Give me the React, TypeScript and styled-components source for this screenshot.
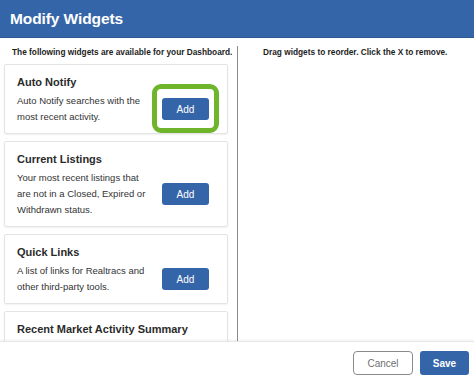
import React from 'react'
import styled, { createGlobalStyle } from 'styled-components'

const GlobalStyle = createGlobalStyle`
  html, body {
    margin: 0;
    padding: 0;
    background: #ffffff;
    font-family: "Liberation Sans", Arial, sans-serif;
  }
`

type Widget = {
  title: string
  description: string
  highlighted?: boolean
}

const widgets: Widget[] = [
  {
    title: 'Auto Notify',
    description: 'Auto Notify searches with the most recent activity.',
    highlighted: true,
  },
  {
    title: 'Current Listings',
    description: 'Your most recent listings that are not in a Closed, Expired or Withdrawn status.',
  },
  {
    title: 'Quick Links',
    description: 'A list of links for Realtracs and other third-party tools.',
  },
  {
    title: 'Recent Market Activity Summary',
    description: 'A summary of recent market activity in your area.',
  },
]

const App: React.FC = (): JSX.Element => {
  return (
    <>
      <GlobalStyle />
      <Modal>
        <Header>
          <Title>Modify Widgets</Title>
        </Header>
        <Body>
          <LeftColumn>
            <Caption>The following widgets are available for your Dashboard.</Caption>
            <CardList>
              {widgets.map((w) => (
                <Card key={w.title}>
                  <CardTitle>{w.title}</CardTitle>
                  <CardRow>
                    <CardText>{w.description}</CardText>
                    <ButtonHolder $highlighted={w.highlighted}>
                      <AddButton>Add</AddButton>
                    </ButtonHolder>
                  </CardRow>
                </Card>
              ))}
            </CardList>
          </LeftColumn>
          <Divider />
          <RightColumn>
            <Caption>Drag widgets to reorder. Click the X to remove.</Caption>
          </RightColumn>
        </Body>
        <Footer>
          <CancelButton>Cancel</CancelButton>
          <SaveButton>Save</SaveButton>
        </Footer>
      </Modal>
    </>
  )
}

export default App

const Modal = styled.div`
  width: 474px;
  height: 382px;
  display: flex;
  flex-direction: column;
  overflow: hidden;
  background: #ffffff;
`

const Header = styled.header`
  height: 37px;
  flex: 0 0 auto;
  background: #3565a9;
  display: flex;
  align-items: center;
  padding: 0 10px;
  border-bottom: 1px solid #2d5895;
`

const Title = styled.h1`
  margin: 0;
  color: #ffffff;
  font-size: 15.5px;
  font-weight: bold;
  letter-spacing: -0.1px;
`

const Body = styled.div`
  flex: 1 1 0;
  min-height: 0;
  display: flex;
  padding-top: 4px;
`

const LeftColumn = styled.div`
  width: 233px;
  display: flex;
  flex-direction: column;
  min-height: 0;
`

const RightColumn = styled.div`
  flex: 1 1 0;
  display: flex;
  flex-direction: column;
  padding-left: 13px;
`

const Divider = styled.div`
  width: 1px;
  background: #8c8c8c;
  margin: 4px 0 0 4px;
`

const Caption = styled.p`
  margin: 0;
  padding: 0 0 0 12px;
  font-size: 8.3px;
  font-weight: bold;
  color: #1d1d1d;
  line-height: 12px;
  height: 20px;
  display: flex;
  align-items: center;
`

const CardList = styled.div`
  flex: 1 1 0;
  min-height: 0;
  overflow: hidden;
  display: flex;
  flex-direction: column;
  gap: 7px;
  padding: 2px 5px 0 4px;
`

const Card = styled.div`
  flex: 0 0 auto;
  border: 1px solid #e4e4e4;
  border-radius: 2px;
  box-shadow: 0 1px 2px rgba(0, 0, 0, 0.06);
  padding: 10px 12px 8px 12px;
  display: flex;
  flex-direction: column;
  gap: 4px;
`

const CardTitle = styled.h3`
  margin: 0;
  font-size: 11px;
  font-weight: bold;
  color: #2b2b2b;
  line-height: 14px;
`

const CardRow = styled.div`
  display: flex;
  align-items: center;
  justify-content: space-between;
`

const CardText = styled.p`
  margin: 0;
  width: 136px;
  font-size: 9.5px;
  line-height: 16px;
  color: #333333;
`

const ButtonHolder = styled.div<{ $highlighted?: boolean }>`
  padding: 9px 5px 8px 5px;
  margin: -14px -4px -13px 0;
  border: 5px solid ${(p) => (p.$highlighted ? '#6fb52c' : 'transparent')};
  border-radius: 9px;
  display: flex;
`

const AddButton = styled.button`
  width: 47px;
  height: 22px;
  border: none;
  border-radius: 3px;
  background: #3565a9;
  color: #ffffff;
  font-family: "Liberation Sans", Arial, sans-serif;
  font-size: 10px;
  padding: 0;
`

const Footer = styled.footer`
  flex: 0 0 auto;
  height: 38px;
  display: flex;
  justify-content: flex-end;
  align-items: center;
  gap: 7px;
  padding: 2px 5px 0 5px;
  border-top: 1px solid #e6e6e6;
  box-shadow: 0 -1px 3px rgba(0, 0, 0, 0.06);
`

const CancelButton = styled.button`
  width: 60px;
  height: 24px;
  border: 1px solid #8a8a8a;
  border-radius: 4px;
  background: #ffffff;
  color: #6f6f6f;
  font-family: "Liberation Sans", Arial, sans-serif;
  font-size: 10px;
  padding: 0;
`

const SaveButton = styled.button`
  width: 49px;
  height: 24px;
  border: none;
  border-radius: 3px;
  background: #3565a9;
  color: #ffffff;
  font-family: "Liberation Sans", Arial, sans-serif;
  font-size: 10px;
  font-weight: bold;
  padding: 0;
`
